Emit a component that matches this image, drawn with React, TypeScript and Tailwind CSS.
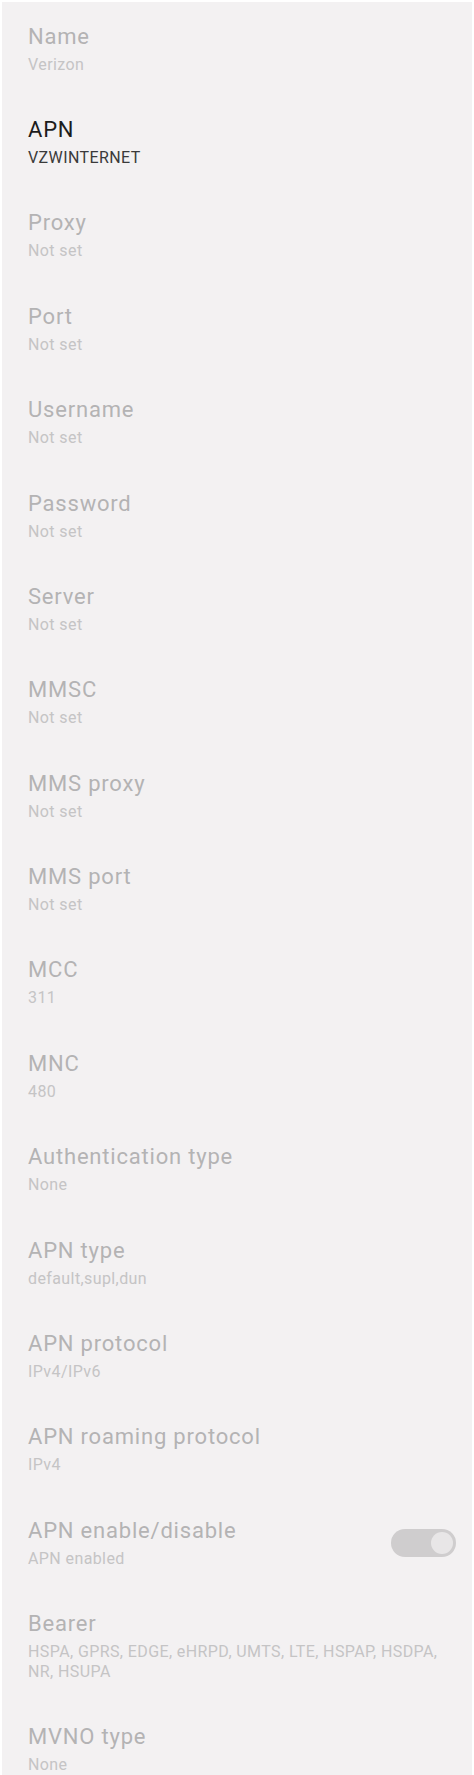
import { useState } from 'react';

interface ApnField {
  label: string;
  value: string;
  active?: boolean;
  toggle?: boolean;
}

const fields: ApnField[] = [
  { label: 'Name', value: 'Verizon' },
  { label: 'APN', value: 'VZWINTERNET', active: true },
  { label: 'Proxy', value: 'Not set' },
  { label: 'Port', value: 'Not set' },
  { label: 'Username', value: 'Not set' },
  { label: 'Password', value: 'Not set' },
  { label: 'Server', value: 'Not set' },
  { label: 'MMSC', value: 'Not set' },
  { label: 'MMS proxy', value: 'Not set' },
  { label: 'MMS port', value: 'Not set' },
  { label: 'MCC', value: '311' },
  { label: 'MNC', value: '480' },
  { label: 'Authentication type', value: 'None' },
  { label: 'APN type', value: 'default,supl,dun' },
  { label: 'APN protocol', value: 'IPv4/IPv6' },
  { label: 'APN roaming protocol', value: 'IPv4' },
  { label: 'APN enable/disable', value: 'APN enabled', toggle: true },
  { label: 'Bearer', value: 'HSPA, GPRS, EDGE, eHRPD, UMTS, LTE, HSPAP, HSDPA, NR, HSUPA' },
  { label: 'MVNO type', value: 'None' },
];

function Toggle({ on }: { on: boolean }) {
  return (
    <div className="w-[65px] h-[28px] rounded-full bg-[#cfcdce] flex items-center justify-end px-[3px] shrink-0">
      <div className={`w-[22px] h-[22px] rounded-full bg-[#e8e6e7] ${on ? '' : 'opacity-80'}`} />
    </div>
  );
}

export default function App() {
  const [enabled] = useState(true);

  return (
    <div
      className="w-[474px] h-[1775px] overflow-hidden bg-white pt-[2px] pl-[2px] pr-[2px]"
      style={{ fontFamily: 'Roboto, "Noto Sans", sans-serif' }}
    >
      <div className="h-full bg-[#f3f1f2] overflow-hidden">
        {fields.map((field) => (
          <div
            key={field.label}
            className="flex items-center pl-[26px] pr-[16px] py-[20.7px]"
          >
            <div className="flex-1 min-w-0">
              <div
                className={`text-[22px] leading-[28px] tracking-[0.8px] ${
                  field.active ? 'text-[#1c1c1c]' : 'text-[#b4b3b4]'
                }`}
              >
                {field.label}
              </div>
              <div
                className={`mt-[4px] text-[16px] leading-[20px] tracking-[0.4px] ${
                  field.active ? 'text-[#3a3a3a]' : 'text-[#c5c4c5]'
                }`}
              >
                {field.value}
              </div>
            </div>
            {field.toggle && <Toggle on={enabled} />}
          </div>
        ))}
      </div>
    </div>
  );
}
